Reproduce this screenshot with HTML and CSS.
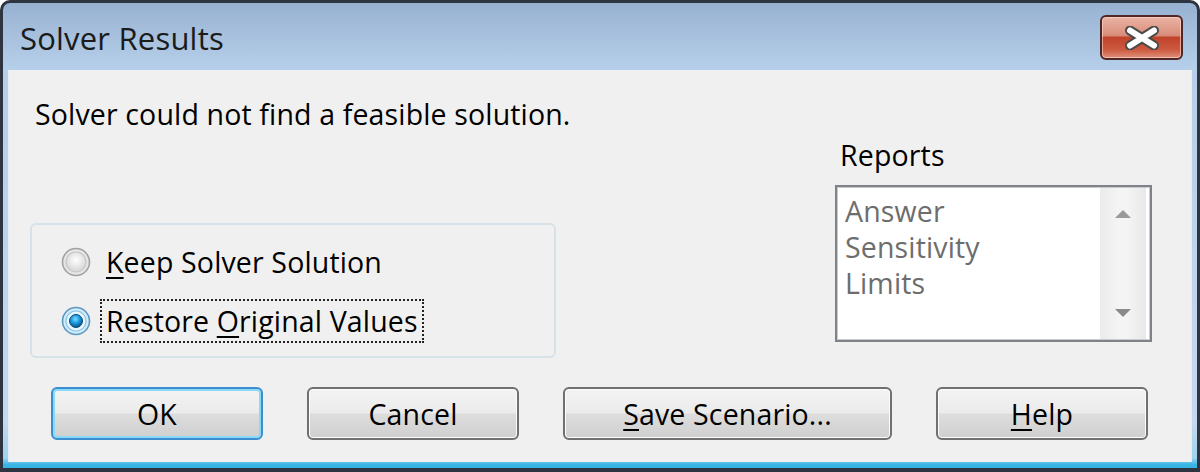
FILE: index.html
```html
<!DOCTYPE html>
<html lang="en">
  <head>
    <meta charset="UTF-8" />
    <meta name="viewport" content="width=device-width, initial-scale=1.0" />
    <title>Solver Results</title>
    <link rel="stylesheet" href="styles.css">
  </head>
  <body>
    <div class="window">
      <div class="titlebar">
        <span class="title">Solver Results</span>
        <button type="button" class="close" aria-label="Close">
          <svg width="38" height="24" viewBox="0 0 38 24">
            <path d="M7 4.5 L31 19.5 M31 4.5 L7 19.5" stroke="#4a4a4a" stroke-width="10" stroke-linecap="round" fill="none" />
            <path d="M7 4.5 L31 19.5 M31 4.5 L7 19.5" stroke="#ffffff" stroke-width="6" stroke-linecap="round" fill="none" />
          </svg>
        </button>
      </div>

      <div class="client">
        <div class="content">
          <div class="left">
            <p class="message">Solver could not find a feasible solution.</p>
            <div class="group">
              <div class="radio-row">
                <svg class="radio" width="30" height="30" viewBox="0 0 30 30">
                  <defs>
                    <radialGradient id="off" cx="50%" cy="40%" r="60%">
                      <stop offset="0" stop-color="#ffffff" />
                      <stop offset="1" stop-color="#d4d4d4" />
                    </radialGradient>
                  </defs>
                  <circle cx="15" cy="15" r="13.5" fill="#e6e6e6" stroke="#a2a2a2" stroke-width="1.6" />
                  <circle cx="15" cy="15" r="10" fill="url(#off)" stroke="#c6c6c6" stroke-width="1.2" />
                </svg>
                <span class="label"><u>K</u>eep Solver Solution</span>
              </div>
              <div class="radio-row">
                <svg class="radio" width="30" height="30" viewBox="0 0 30 30">
                  <defs>
                    <radialGradient id="dot" cx="45%" cy="35%" r="65%">
                      <stop offset="0" stop-color="#7fdcff" />
                      <stop offset="0.5" stop-color="#1a9be0" />
                      <stop offset="1" stop-color="#0b4f86" />
                    </radialGradient>
                  </defs>
                  <circle cx="15" cy="15" r="13.5" fill="#cfeaf9" stroke="#5d98c2" stroke-width="1.6" />
                  <circle cx="15" cy="15" r="10" fill="#e8f6fd" stroke="#8cc6e6" stroke-width="1.2" />
                  <circle cx="15" cy="15" r="6.5" fill="url(#dot)" stroke="#0d4a78" stroke-width="1" />
                </svg>
                <span class="label focused">Restore <u>O</u>riginal Values</span>
              </div>
            </div>
          </div>

          <div class="reports">
            <div class="reports-label">Reports</div>
            <div class="listbox">
              <ul class="items">
                <li>Answer</li>
                <li>Sensitivity</li>
                <li>Limits</li>
              </ul>
              <div class="scrollbar">
                <span class="arrow up"></span>
                <span class="arrow down"></span>
              </div>
            </div>
          </div>
        </div>

        <div class="buttons">
          <button type="button" class="btn default">OK</button>
          <button type="button" class="btn">Cancel</button>
          <button type="button" class="btn wide"><u>S</u>ave Scenario...</button>
          <button type="button" class="btn"><u>H</u>elp</button>
        </div>
      </div>
    </div>
  </body>
</html>
```

FILE: styles.css
```css
html,
body {
  margin: 0;
  padding: 0;
  background: #ffffff;
}

body {
  font-family: "Open Sans", "Noto Sans", sans-serif;
  font-size: 28.5px;
  letter-spacing: 0.15px;
  color: #000;
  overflow: hidden;
}

.window {
  box-sizing: border-box;
  width: 1200px;
  height: 472px;
  display: flex;
  flex-direction: column;
  border: 3px solid #2e3440;
  border-bottom-width: 4px;
  border-radius: 10px 10px 0 0;
  background: linear-gradient(to bottom, #97b2d1 0, #b6cfea 66px, #c3d9ef 420px, #9fd4ee 455px, #36b4e4 462px);
}

/* title bar */
.titlebar {
  height: 67px;
  display: flex;
  justify-content: space-between;
  align-items: flex-start;
  padding: 12px 14px 0 17px;
  box-sizing: border-box;
}
.title {
  margin-top: 3px;
  font-size: 31px;
  letter-spacing: 0.2px;
  line-height: 40px;
  color: #1b1b1b;
}
.close {
  width: 83px;
  height: 45px;
  padding: 0;
  display: flex;
  align-items: center;
  justify-content: center;
  border: 2px solid #4f2727;
  border-radius: 6px;
  background: linear-gradient(to bottom, #eab3a5 0, #d98d7a 45%, #c0432b 50%, #cd5a40 80%, #e0917c 100%);
  box-shadow: inset 0 0 0 1px rgba(255, 220, 210, 0.6);
}

/* client area */
.client {
  flex: 1;
  margin: 0 5px 6px;
  background: #f0f0f0;
  border-left: 1px solid #e4edf6;
  border-right: 1px solid #e4edf6;
  padding: 26px 0 22px;
  box-sizing: border-box;
}

.content {
  display: flex;
  justify-content: space-between;
  align-items: flex-start;
  padding: 0 39px 0 21px;
}

.message {
  margin: 0;
  padding-left: 5px;
  line-height: 36px;
}

.group {
  margin-top: 91px;
  width: 526px;
  height: 135px;
  box-sizing: border-box;
  padding: 15px 0 0 29px;
  border: 2px solid #d7e1e8;
  border-radius: 6px;
}
.radio-row {
  display: flex;
  align-items: center;
  height: 44px;
}
.radio-row + .radio-row {
  margin-top: 15px;
}
.radio {
  margin-right: 9px;
  flex: none;
}
.label {
  line-height: 40px;
  padding: 0 4px;
  border: 2px dotted transparent;
}
.label.focused {
  border-color: #222;
}
u {
  text-decoration-thickness: 2px;
  text-underline-offset: 4px;
}

/* reports list */
.reports {
  width: 317px;
  margin-top: 41px;
}
.reports-label {
  line-height: 36px;
  padding-left: 5px;
}
.listbox {
  margin-top: 12px;
  height: 157px;
  box-sizing: border-box;
  display: flex;
  background: #fff;
  border: 2px solid #7f8288;
  box-shadow: inset 0 0 0 1px #c9cbcf;
  padding: 1px 4px 1px 1px;
}
.items {
  flex: 1;
  margin: 0;
  padding: 5px 0 0 7px;
  list-style: none;
  color: #6d6d6d;
  line-height: 36px;
}
.scrollbar {
  width: 46px;
  display: flex;
  flex-direction: column;
  justify-content: space-between;
  align-items: center;
  padding: 22px 0 22px;
  background: linear-gradient(to right, #ebebeb, #f4f4f4 40%, #f4f4f4 60%, #e8e8e8);
}
.arrow {
  width: 0;
  height: 0;
  border-left: 8px solid transparent;
  border-right: 8px solid transparent;
}
.arrow.up {
  border-bottom: 8px solid #9a9a9a;
}
.arrow.down {
  border-top: 8px solid #8a8a8a;
}

/* buttons */
.buttons {
  display: flex;
  gap: 44px;
  margin-top: 29px;
  padding: 0 43px 0 42px;
}
.btn {
  width: 212px;
  height: 53px;
  padding: 0;
  font-family: inherit;
  font-size: 28.5px;
  letter-spacing: 0.15px;
  color: #000;
  border: 2px solid #707070;
  border-radius: 6px;
  background: linear-gradient(to bottom, #f3f3f3 0, #ebebeb 49%, #dddddd 51%, #cfcfcf 100%);
  box-shadow: inset 0 0 0 1px #fcfcfc;
}
.btn.wide {
  width: 329px;
}
.btn.default {
  border-color: #3c8fcf;
  box-shadow: inset 0 0 0 2px #8ad9f8;
}
```
